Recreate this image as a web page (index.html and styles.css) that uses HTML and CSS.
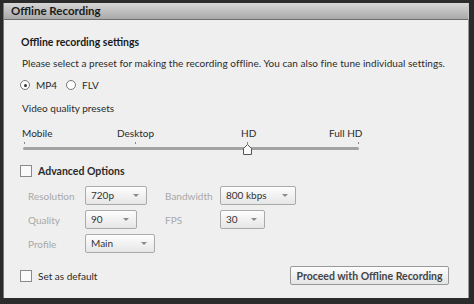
FILE: index.html
```html
<!DOCTYPE html>
<html>
<head>
<meta charset="utf-8">
<link rel="stylesheet" href="styles.css">
</head>
<body>
<div class="dialog">
  <div class="titlebar">Offline Recording</div>
  <div class="content">
    <div class="heading">Offline recording settings</div>
    <div class="desc">Please select a preset for making the recording offline. You can also fine tune individual settings.</div>
    <div class="radios">
      <label class="radio"><span class="dot on"></span>MP4</label>
      <label class="radio"><span class="dot"></span>FLV</label>
    </div>
    <div class="label">Video quality presets</div>
    <div class="slider">
      <div class="slabels">
        <span class="sl-mobile">Mobile</span>
        <span class="sl-desktop">Desktop</span>
        <span class="sl-hd">HD</span>
        <span class="sl-full">Full HD</span>
      </div>
      <div class="ticks">
        <span class="tick"></span><span class="tick"></span><span class="tick"></span><span class="tick"></span>
      </div>
      <div class="track">
        <svg class="thumb" width="9" height="11" viewBox="0 0 9 11"><path d="M0.5 4.5 L4.5 0.5 L8.5 4.5 L8.5 10.5 L0.5 10.5 Z" fill="#fafafa" stroke="#555" stroke-width="1"/></svg>
      </div>
    </div>
    <label class="check bold"><span class="box"></span>Advanced Options</label>
    <div class="adv">
      <div class="row">
        <span class="flabel">Resolution</span>
        <span class="select w62">720p<i class="arr"></i></span>
        <span class="flabel2">Bandwidth</span>
        <span class="select w76">800 kbps<i class="arr"></i></span>
      </div>
      <div class="row">
        <span class="flabel">Quality</span>
        <span class="select w52">90<i class="arr"></i></span>
        <span class="gap52"></span>
        <span class="flabel2">FPS</span>
        <span class="select w45">30<i class="arr"></i></span>
      </div>
      <div class="row">
        <span class="flabel">Profile</span>
        <span class="select w70">Main<i class="arr"></i></span>
      </div>
    </div>
    <div class="footer">
      <label class="check"><span class="box"></span>Set as default</label>
      <button class="btn">Proceed with Offline Recording</button>
    </div>
  </div>
</div>
</body>
</html>
```
FILE: styles.css
```css
html, body {
  margin: 0;
  padding: 0;
  background: #2b2b2b;
  width: 474px;
  height: 304px;
  overflow: hidden;
}
body {
  font-family: Lato, "Open Sans", sans-serif;
  font-size: 10px;
  color: #2a2a2a;
  white-space: nowrap;
}
.dialog {
  margin: 3px 0 0 3px;
  width: 466px;
  height: 295px;
  background: #efefef;
  border-left: 1px solid #777;
  box-sizing: border-box;
  display: flex;
  flex-direction: column;
}
.titlebar {
  height: 17px;
  box-sizing: border-box;
  background: linear-gradient(#d6d6d6, #a9a9a9);
  border-bottom: 1px solid #6e6e6e;
  border-right: 1px solid #c8c8c8;
  padding-left: 7px;
  font-size: 11.5px;
  font-weight: 700;
  line-height: 16px;
  color: #1a1a1a;
}
.content {
  flex: 1;
  padding: 15px 0 0 16px;
  border-right: 1px solid #9a9a9a;
}
.heading {
  font-weight: 700;
  font-size: 10.5px;
  line-height: 14px;
  height: 14px;
  margin-left: 1px;
  color: #1a1a1a;
}
.desc {
  margin-top: 7px;
  line-height: 14px;
  margin-left: 2px;
  letter-spacing: 0.04px;
}
.radios {
  margin-top: 8px;
  display: flex;
  gap: 9px;
  height: 14px;
  line-height: 14px;
}
.radio {
  display: flex;
  align-items: center;
}
.dot {
  width: 10px;
  height: 10px;
  border: 1px solid #777;
  border-radius: 50%;
  background: #fff;
  box-sizing: border-box;
  margin-right: 6px;
  position: relative;
}
.dot.on::after {
  content: "";
  position: absolute;
  left: 2.5px;
  top: 2.5px;
  width: 3px;
  height: 3px;
  border-radius: 50%;
  background: #333;
}
.label {
  margin-top: 9px;
  margin-left: 2px;
  line-height: 14px;
}
.slider {
  margin-top: 11px;
  width: 342px;
  margin-left: 1px;
}
.slabels {
  position: relative;
  height: 14px;
  line-height: 14px;
}
.slabels span {
  position: absolute;
  top: 0;
}
.sl-mobile { left: 1px; }
.sl-desktop { left: 96px; }
.sl-hd { left: 220px; }
.sl-full { left: 308px; }
.ticks {
  position: relative;
  height: 6px;
}
.tick {
  position: absolute;
  top: 2px;
  width: 1px;
  height: 2px;
  background: #888;
}
.tick:nth-child(1) { left: 3px; }
.tick:nth-child(2) { left: 114px; }
.tick:nth-child(3) { left: 226px; }
.tick:nth-child(4) { left: 337px; }
.track {
  position: relative;
  margin-left: 2px;
  width: 336px;
  height: 3px;
  background: #a2a2a2;
  border-radius: 2px;
  margin-top: 1px;
}
.thumb {
  position: absolute;
  left: 220px;
  top: -3px;
}
.check {
  display: flex;
  align-items: center;
  height: 14px;
  line-height: 14px;
}
.check.bold {
  margin-top: 14px;
  font-weight: 700;
  font-size: 10.5px;
}
.box {
  width: 12px;
  height: 12px;
  box-sizing: border-box;
  border: 1px solid #8a8a8a;
  background: #fafafa;
  margin-right: 6px;
}
.adv {
  margin-top: 8px;
  margin-left: 8px;
  display: flex;
  flex-direction: column;
  gap: 5px;
}
.row {
  display: flex;
  align-items: center;
  height: 19px;
}
.flabel {
  width: 57px;
  color: #a8a8a8;
}
.flabel2 {
  width: 55px;
  margin-left: 18px;
  color: #a8a8a8;
}
.gap52 { width: 10px; }
.select {
  height: 19px;
  box-sizing: border-box;
  border: 1px solid #aaa;
  border-radius: 2px;
  background: linear-gradient(#fdfdfd, #e6e6e6);
  padding-left: 5px;
  line-height: 17px;
  position: relative;
  color: #333;
}
.arr {
  position: absolute;
  right: 7px;
  top: 7px;
  width: 0;
  height: 0;
  border-left: 3px solid transparent;
  border-right: 3px solid transparent;
  border-top: 3px solid #8a8a8a;
}
.w62 { width: 62px; }
.w76 { width: 76px; }
.w52 { width: 52px; }
.w45 { width: 45px; }
.w70 { width: 70px; }
.footer {
  margin-top: 13px;
  display: flex;
  align-items: center;
  justify-content: space-between;
  width: 429px;
}
.btn {
  width: 159px;
  height: 19px;
  border: 1px solid #999;
  border-radius: 2px;
  background: linear-gradient(#fdfdfd, #e4e4e4);
  font-family: inherit;
  font-size: 10.5px;
  font-weight: 700;
  color: #444;
  padding: 0;
}
```
